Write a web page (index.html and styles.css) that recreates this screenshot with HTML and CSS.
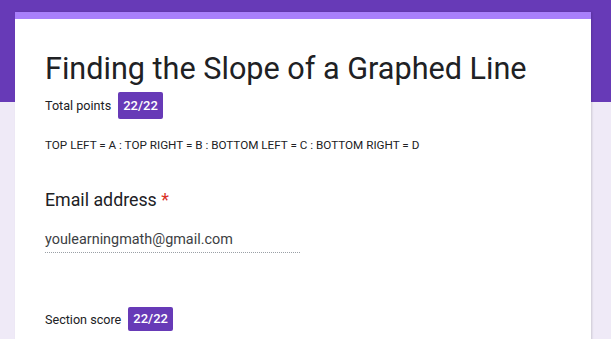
FILE: index.html
```html
<!DOCTYPE html>
<html>
<head>
<meta charset="utf-8">
<link rel="stylesheet" href="styles.css">
</head>
<body>
<div class="band"></div>
<div class="page">
  <div class="card">
    <div class="stripe"></div>
    <div class="content">
      <h1 class="title">Finding the Slope of a Graphed Line</h1>
      <div class="points"><span class="label">Total points</span><span class="badge">22/22</span></div>
      <div class="desc">TOP LEFT = A : TOP RIGHT = B : BOTTOM LEFT = C : BOTTOM RIGHT = D</div>
      <div class="question">Email address <span class="req">*</span></div>
      <div class="answer">youlearningmath@gmail.com</div>
      <div class="points section"><span class="label">Section score</span><span class="badge">22/22</span></div>
    </div>
  </div>
</div>
</body>
</html>
```
FILE: styles.css
```css
html, body {
  margin: 0;
  padding: 0;
}
body {
  background: #efeaf7;
  font-family: Roboto, "Noto Sans", Arial, sans-serif;
  color: #202124;
  position: relative;
  height: 339px;
  overflow: hidden;
}
.band {
  height: 102px;
  background: #673ab7;
}
.page {
  position: absolute;
  top: 12px;
  left: 15px;
  width: 576px;
}
.card {
  background: #fff;
  box-shadow: 1px 0 2px rgba(0,0,0,0.15);
  height: 340px;
}
.stripe {
  height: 7px;
  background: #a87ffb;
}
.content {
  padding: 0 30px;
}
.title {
  margin: 0;
  font-weight: 400;
  font-size: 30.6px;
  line-height: 36px;
  padding-top: 32px;
  color: #202124;
}
.points {
  display: flex;
  align-items: center;
  gap: 7px;
  margin-top: 5px;
}
.label {
  font-size: 12.6px;
  color: #202124;
}
.badge {
  background: #673ab7;
  color: #fff;
  font-size: 13px;
  font-weight: 500;
  padding: 0 5px;
  height: 27px;
  line-height: 27px;
  border-radius: 2px;
}
.desc {
  font-size: 11.7px;
  margin-top: 18px;
  line-height: 16px;
}
.question {
  font-size: 17.8px;
  margin-top: 35px;
  line-height: 24px;
}
.req {
  color: #d93025;
}
.answer {
  font-size: 14.4px;
  color: #3c4043;
  margin-top: 18px;
  width: 255px;
  border-bottom: 1px dotted #9aa0a6;
  line-height: 20px;
  padding-bottom: 2px;
}
.section {
  margin-top: 54px;
}
.section .badge {
  height: 24px;
  line-height: 24px;
}
```
